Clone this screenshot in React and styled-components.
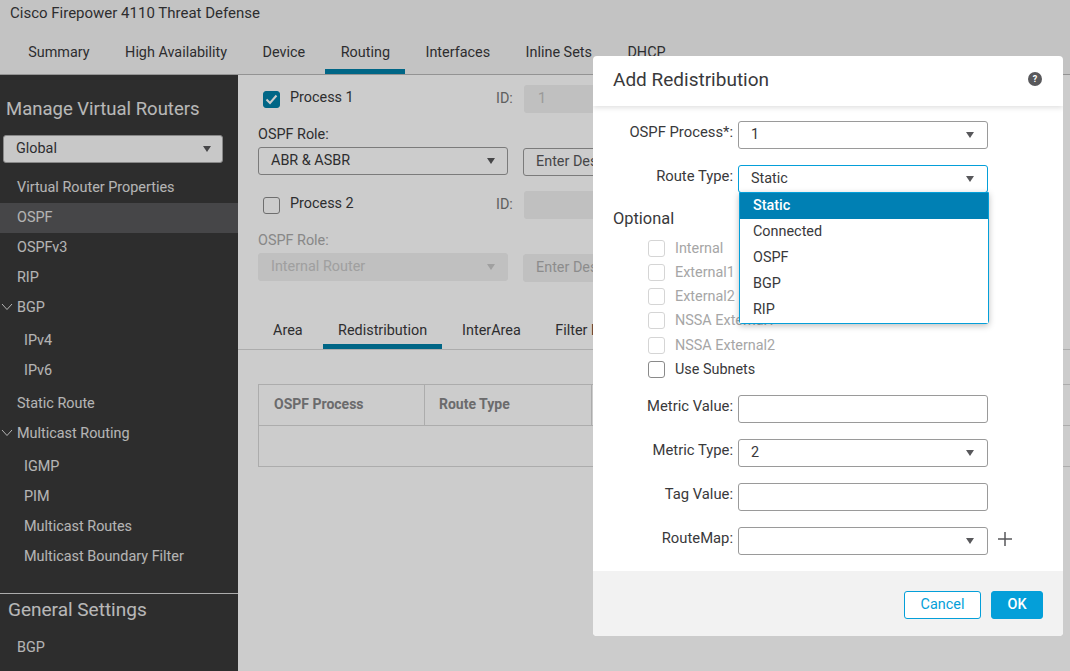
import React from "react";
import styled, { createGlobalStyle } from "styled-components";

const Global = createGlobalStyle`
  html, body { margin: 0; padding: 0; }
  body { font-family: Roboto, "Liberation Sans", sans-serif; font-size: 14.4px; color: #333; background: #fff; }
  * { box-sizing: border-box; }
`;

const Page = styled.div`
  position: relative;
  width: 1070px;
  height: 671px;
  overflow: hidden;
  display: flex;
  flex-direction: column;
`;
const TopArea = styled.header`
  height: 75px;
  background: #f4f4f4;
  border-bottom: 1px solid #b8b8b8;
  flex: none;
`;
const DeviceTitle = styled.div`
  height: 26px;
  line-height: 27px;
  padding-left: 10px;
  font-size: 15px;
  color: #39393b;
`;
const Tabs = styled.nav`
  display: flex;
  gap: ${p => p.$gap}px;
  padding-left: ${p => p.$left}px;
  height: ${p => p.$h}px;
  border-bottom: ${p => (p.$line ? "1px solid #d8d8d8" : "none")};
`;
const Tab = styled.div`
  padding: ${p => p.$top}px ${p => p.$side}px 0;
  display: flex;
  align-items: center;
  height: 100%;
  color: #39393b;
  border-bottom: 5px solid ${p => (p.$active ? "#0080a8" : "transparent")};
`;
const Body = styled.div`
  flex: 1;
  display: flex;
  min-height: 0;
`;
const Sidebar = styled.aside`
  width: 238px;
  flex: none;
  background: #393939;
  color: #e2e2e2;
  display: flex;
  flex-direction: column;
`;
const SideTitle = styled.h2`
  margin: 0;
  font-weight: 400;
  font-size: 18.5px;
  line-height: 24px;
  color: #e6e6e6;
  padding: 22px 0 14px 6px;
`;
const VrSelect = styled.div`
  margin-left: 3px;
  width: 220px;
  height: 28px;
  background: #fbfbfb;
  border-radius: 3px;
  border: 1px solid #aaa;
  padding: 0 11px 2px 12px;
  display: flex;
  align-items: center;
  justify-content: space-between;
  color: #39393b;
  margin-bottom: 10px;
`;
const Caret = styled.span`
  width: 0;
  height: 0;
  border-left: 4px solid transparent;
  border-right: 4px solid transparent;
  border-top: 6px solid ${p => p.$c || "#58585b"};
  margin-top: 2px;
  flex: none;
`;
const SideItem = styled.div`
  height: 30px;
  line-height: 29px;
  padding-left: 17px;
  position: relative;
  background: ${p => (p.$active ? "#58585a" : "transparent")};
`;
const SubList = styled.div`
  padding: 3px 0;
`;
const SubItem = styled.div`
  height: 30px;
  line-height: 29px;
  padding-left: 24px;
`;
const Chevron = styled.svg`
  position: absolute;
  left: 1px;
  top: 10px;
  width: 12px;
  height: 8px;
  fill: none;
  stroke: #e2e2e2;
  stroke-width: 1;
`;
const Divider = styled.div`
  border-top: 1px solid #d8d8d8;
  margin-top: 18px;
`;
const SettingsTitle = styled.h2`
  margin: 0;
  font-weight: 400;
  font-size: 19px;
  line-height: 24px;
  color: #e6e6e6;
  padding: 4px 0 11px 8px;
`;
const Main = styled.main`
  flex: 1;
  background: #fff;
  min-width: 0;
`;
const ProcessRow = styled.div`
  display: flex;
  align-items: center;
  height: 28px;
  margin-top: ${p => p.$mt}px;
  padding-left: 25px;
`;
const Check = styled.span`
  width: 17px;
  height: 17px;
  border-radius: 3px;
  flex: none;
  border: 1px solid ${p => (p.$checked ? "#0080a8" : p.$faint ? "#d5d5d5" : "#8a8a8a")};
  background: ${p => (p.$checked ? "#0080a8" : "#fff")};
  display: flex;
  align-items: center;
  justify-content: center;
`;
const ProcessName = styled.span`
  margin-left: 10px;
  width: 206px;
  color: #39393b;
  padding-bottom: 4px;
`;
const IdLabel = styled.span`
  width: 28px;
  color: #777;
  padding-bottom: 2px;
`;
const IdInput = styled.div`
  width: 200px;
  height: 28px;
  background: #f0f0f0;
  border-radius: 3px;
  padding-left: 14px;
  line-height: 28px;
  color: #c0c0c0;
`;
const RoleLabel = styled.div`
  padding-left: 20px;
  height: 17px;
  line-height: 18px;
  margin-top: ${p => p.$mt}px;
  color: ${p => (p.$off ? "#aaa" : "#39393b")};
`;
const RoleRow = styled.div`
  display: flex;
  gap: 15px;
  padding-left: 20px;
  margin-top: 4px;
`;
const RoleSelect = styled.div`
  width: 250px;
  height: 28px;
  border-radius: 3px;
  padding: 0 12px 2px 12px;
  display: flex;
  align-items: center;
  justify-content: space-between;
  border: 1px solid ${p => (p.$off ? "#f0f0f0" : "#9a9a9a")};
  background: ${p => (p.$off ? "#f0f0f0" : "#fff")};
  color: ${p => (p.$off ? "#c8c8c8" : "#39393b")};
`;
const DescInput = styled.div`
  width: 300px;
  height: 28px;
  margin-top: 1px;
  border-radius: 3px;
  padding-left: 12px;
  line-height: 25px;
  border: 1px solid ${p => (p.$off ? "#f0f0f0" : "#9a9a9a")};
  background: ${p => (p.$off ? "#f0f0f0" : "#fff")};
  color: ${p => (p.$off ? "#b0b0b0" : "#58585b")};
`;
const SubTabs = styled.div`
  margin-top: 31px;
`;
const GridTable = styled.div`
  margin: 34px 0 0 20px;
  border: 1px solid #d8d8d8;
  border-right: none;
  height: 83px;
`;
const GridHead = styled.div`
  display: flex;
  height: 41px;
  border-bottom: 1px solid #d8d8d8;
`;
const GridCell = styled.div`
  width: ${p => p.$w}px;
  border-right: 1px solid #d8d8d8;
  padding-left: ${p => p.$pad}px;
  line-height: 38px;
  font-size: 14px;
  font-weight: 700;
  color: #868688;
`;

const Backdrop = styled.div`
  position: absolute;
  inset: 0;
  background: rgba(0, 0, 0, 0.2);
`;
const Modal = styled.section`
  position: absolute;
  left: 593px;
  top: 56px;
  width: 470px;
  height: 580px;
  background: #fff;
  border-radius: 4px;
  display: flex;
  flex-direction: column;
  overflow: hidden;
`;
const ModalHead = styled.div`
  height: 50px;
  flex: none;
  padding: 0 21px 4px 20px;
  display: flex;
  align-items: center;
  justify-content: space-between;
  box-shadow: 0 2px 5px rgba(0, 0, 0, 0.12);
  position: relative;
`;
const ModalTitle = styled.h1`
  margin: 0;
  font-size: 19px;
  font-weight: 400;
  color: #39393b;
`;
const Help = styled.span`
  width: 14px;
  height: 14px;
  border-radius: 50%;
  background: #58585b;
  color: #fff;
  font-size: 9px;
  font-weight: 700;
  display: flex;
  align-items: center;
  justify-content: center;
`;
const ModalBody = styled.div`
  flex: 1;
  padding: 15px 0 0 0;
  position: relative;
`;
const FormRow = styled.div`
  display: flex;
  gap: 5px;
  margin-bottom: 16px;
  margin-top: ${p => p.$mt || 0}px;
  position: relative;
`;
const Label = styled.label`
  width: 140px;
  text-align: right;
  line-height: 22px;
  font-size: 14.8px;
  color: #39393b;
`;
const Field = styled.div`
  width: 250px;
  height: 28px;
  border: 1px solid ${p => (p.$focus ? "#049fd9" : "#9a9a9a")};
  border-radius: 3px;
  padding: 0 13px 2px 12px;
  display: flex;
  align-items: center;
  justify-content: space-between;
  color: #39393b;
  background: #fff;
`;
const Plus = styled.svg`
  width: 14px;
  height: 14px;
  margin: 5px 0 0 5px;
  stroke: #58585b;
  stroke-width: 1.5;
`;
const Menu = styled.ul`
  position: absolute;
  left: 146px;
  top: 27px;
  width: 250px;
  margin: 0;
  padding: 0;
  list-style: none;
  background: #fff;
  border: 1px solid #049fd9;
  border-radius: 0 0 3px 3px;
  box-shadow: 0 2px 6px rgba(0, 0, 0, 0.25);
  z-index: 2;
`;
const MenuItem = styled.li`
  height: 26px;
  line-height: 25px;
  padding-left: 13px;
  color: ${p => (p.$on ? "#fff" : "#39393b")};
  background: ${p => (p.$on ? "#0080b4" : "#fff")};
  font-weight: ${p => (p.$on ? 500 : 400)};
`;
const Optional = styled.div`
  font-size: 16.4px;
  line-height: 20px;
  color: #39393b;
  padding-left: 20px;
  margin-bottom: 10.5px;
`;
const CheckRow = styled.div`
  display: flex;
  align-items: center;
  gap: 10px;
  height: 17px;
  padding-left: 55px;
  margin-bottom: 7.3px;
  color: ${p => (p.$off ? "#a6a6a6" : "#39393b")};
`;
const Foot = styled.div`
  height: 65px;
  flex: none;
  background: #f2f2f2;
  padding: 20px 20px 0 0;
  display: flex;
  justify-content: flex-end;
  gap: 10px;
`;
const Btn = styled.button`
  width: ${p => p.$w}px;
  height: 28px;
  border-radius: 3px;
  border: 1px solid #049fd9;
  background: ${p => (p.$primary ? "#049fd9" : "#fff")};
  color: ${p => (p.$primary ? "#fff" : "#049fd9")};
  font: ${p => (p.$primary ? 500 : 400)} 14.4px Roboto, sans-serif;
  padding: 0 0 2px;
`;

const Tick = () => (
  <svg width="13" height="11" viewBox="0 0 13 11" fill="none" stroke="#fff" strokeWidth="2"><path d="M1.5 5.5 L5 9 L11.5 1.5" /></svg>
);
const Chev = () => (
  <Chevron viewBox="0 0 12 8"><path d="M1 1 L6 6.5 L11 1" /></Chevron>
);

export default function App() {
  return (
    <Page>
      <Global />
      <TopArea>
        <DeviceTitle>Cisco Firepower 4110 Threat Defense</DeviceTitle>
        <Tabs $left={13} $gap={5} $h={48}>
          <Tab $top={10} $side={15.25}>Summary</Tab>
          <Tab $top={10} $side={15.25}>High Availability</Tab>
          <Tab $top={10} $side={15.25}>Device</Tab>
          <Tab $top={10} $side={15.25} $active>Routing</Tab>
          <Tab $top={10} $side={15.25}>Interfaces</Tab>
          <Tab $top={10} $side={15.25}>Inline Sets</Tab>
          <Tab $top={10} $side={15.25}>DHCP</Tab>
        </Tabs>
      </TopArea>
      <Body>
        <Sidebar>
          <SideTitle>Manage Virtual Routers</SideTitle>
          <VrSelect>Global<Caret /></VrSelect>
          <SideItem>Virtual Router Properties</SideItem>
          <SideItem $active>OSPF</SideItem>
          <SideItem>OSPFv3</SideItem>
          <SideItem>RIP</SideItem>
          <SideItem><Chev />BGP</SideItem>
          <SubList>
            <SubItem>IPv4</SubItem>
            <SubItem>IPv6</SubItem>
          </SubList>
          <SideItem>Static Route</SideItem>
          <SideItem><Chev />Multicast Routing</SideItem>
          <SubList>
            <SubItem>IGMP</SubItem>
            <SubItem>PIM</SubItem>
            <SubItem>Multicast Routes</SubItem>
            <SubItem>Multicast Boundary Filter</SubItem>
          </SubList>
          <Divider />
          <SettingsTitle>General Settings</SettingsTitle>
          <SideItem>BGP</SideItem>
        </Sidebar>
        <Main>
          <ProcessRow $mt={10}>
            <Check $checked><Tick /></Check>
            <ProcessName>Process 1</ProcessName>
            <IdLabel>ID:</IdLabel>
            <IdInput>1</IdInput>
          </ProcessRow>
          <RoleLabel $mt={13}>OSPF Role:</RoleLabel>
          <RoleRow>
            <RoleSelect>ABR &amp; ASBR<Caret /></RoleSelect>
            <DescInput>Enter Description</DescInput>
          </RoleRow>
          <ProcessRow $mt={15}>
            <Check />
            <ProcessName>Process 2</ProcessName>
            <IdLabel>ID:</IdLabel>
            <IdInput />
          </ProcessRow>
          <RoleLabel $mt={13} $off>OSPF Role:</RoleLabel>
          <RoleRow>
            <RoleSelect $off>Internal Router<Caret $c="#c8c8c8" /></RoleSelect>
            <DescInput $off>Enter Description</DescInput>
          </RoleRow>
          <SubTabs>
            <Tabs $left={20} $gap={5.5} $h={37} $line>
              <Tab $top={4} $side={15}>Area</Tab>
              <Tab $top={4} $side={15} $active>Redistribution</Tab>
              <Tab $top={4} $side={14.5}>InterArea</Tab>
              <Tab $top={4} $side={14.5}>Filter List</Tab>
            </Tabs>
          </SubTabs>
          <GridTable>
            <GridHead>
              <GridCell $w={166} $pad={15}>OSPF Process</GridCell>
              <GridCell $w={167} $pad={14}>Route Type</GridCell>
            </GridHead>
          </GridTable>
        </Main>
      </Body>
      <Backdrop />
      <Modal>
        <ModalHead>
          <ModalTitle>Add Redistribution</ModalTitle>
          <Help>?</Help>
        </ModalHead>
        <ModalBody>
          <FormRow><Label>OSPF Process*:</Label><Field>1<Caret /></Field></FormRow>
          <FormRow>
            <Label>Route Type:</Label>
            <Field $focus>Static<Caret /></Field>
            <Menu>
              <MenuItem $on>Static</MenuItem>
              <MenuItem>Connected</MenuItem>
              <MenuItem>OSPF</MenuItem>
              <MenuItem>BGP</MenuItem>
              <MenuItem>RIP</MenuItem>
            </Menu>
          </FormRow>
          <Optional>Optional</Optional>
          <CheckRow $off><Check $faint />Internal</CheckRow>
          <CheckRow $off><Check $faint />External1</CheckRow>
          <CheckRow $off><Check $faint />External2</CheckRow>
          <CheckRow $off><Check $faint />NSSA External1</CheckRow>
          <CheckRow $off><Check $faint />NSSA External2</CheckRow>
          <CheckRow><Check />Use Subnets</CheckRow>
          <FormRow $mt={17.5}><Label>Metric Value:</Label><Field /></FormRow>
          <FormRow><Label>Metric Type:</Label><Field>2<Caret /></Field></FormRow>
          <FormRow><Label>Tag Value:</Label><Field /></FormRow>
          <FormRow>
            <Label>RouteMap:</Label>
            <Field><span /><Caret /></Field>
            <Plus viewBox="0 0 14 14"><path d="M7 0 V14 M0 7 H14" /></Plus>
          </FormRow>
        </ModalBody>
        <Foot>
          <Btn $w={77}>Cancel</Btn>
          <Btn $w={52} $primary>OK</Btn>
        </Foot>
      </Modal>
    </Page>
  );
}
